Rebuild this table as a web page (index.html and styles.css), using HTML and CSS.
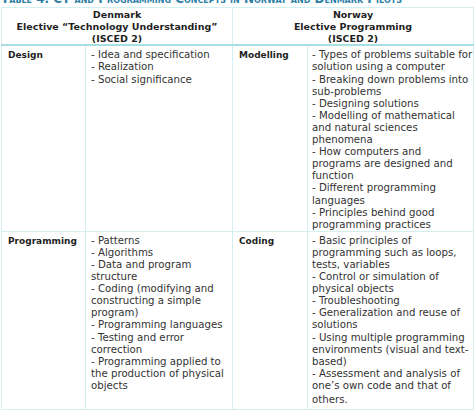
FILE: index.html
```html
<!DOCTYPE html>
<html>
<head>
<meta charset="utf-8">
<link rel="stylesheet" href="styles.css">
</head>
<body>
<div class="caption">Table 4. CT and Programming Concepts in Norway and Denmark Pilots</div>
<table class="grid">
  <colgroup>
    <col class="c1"><col class="c2"><col class="c3"><col class="c4">
  </colgroup>
  <thead>
    <tr>
      <th colspan="2">Denmark<br>Elective “Technology Understanding”<br>(ISCED 2)</th>
      <th colspan="2">Norway<br>Elective Programming<br>(ISCED 2)</th>
    </tr>
  </thead>
  <tbody>
    <tr class="first">
      <td class="label">Design</td>
      <td class="list">
        <div>- Idea and specification</div>
        <div>- Realization</div>
        <div>- Social significance</div>
      </td>
      <td class="label">Modelling</td>
      <td class="list right">
        <div>- Types of problems suitable for<br>solution using a computer</div>
        <div>- Breaking down problems into<br>sub-problems</div>
        <div>- Designing solutions</div>
        <div>- Modelling of mathematical<br>and natural sciences<br>phenomena</div>
        <div>- How computers and<br>programs are designed and<br>function</div>
        <div>- Different programming<br>languages</div>
        <div>- Principles behind good<br>programming practices</div>
      </td>
    </tr>
    <tr class="second">
      <td class="label">Programming</td>
      <td class="list">
        <div>- Patterns</div>
        <div>- Algorithms</div>
        <div>- Data and program<br>structure</div>
        <div>- Coding (modifying and<br>constructing a simple<br>program)</div>
        <div>- Programming languages</div>
        <div>- Testing and error<br>correction</div>
        <div>- Programming applied to<br>the production of physical<br>objects</div>
      </td>
      <td class="label">Coding</td>
      <td class="list right">
        <div>- Basic principles of<br>programming such as loops,<br>tests, variables</div>
        <div>- Control or simulation of<br>physical objects</div>
        <div>- Troubleshooting</div>
        <div>- Generalization and reuse of<br>solutions</div>
        <div>- Using multiple programming<br>environments (visual and text-<br>based)</div>
        <div>- Assessment and analysis of<br>one’s own code and that of<br><span class="tail">others.</span></div>
      </td>
    </tr>
  </tbody>
</table>
</body>
</html>
```
FILE: styles.css
```css
html, body {
  margin: 0;
  padding: 0;
  background: #ffffff;
}
body {
  font-family: "DejaVu Sans", sans-serif;
  color: #2a2a2a;
  font-size: 10.2px;
  line-height: 12.1px;
  overflow: hidden;
  height: 413px;
}
.caption {
  margin-top: -7px;
  height: 14px;
  padding-left: 1px;
  font-size: 12px;
  line-height: 12px;
  font-weight: bold;
  font-variant: small-caps;
  color: #2f7fa6;
  white-space: nowrap;
}
.grid {
  margin-left: 1px;
  width: 472px;
  border-collapse: collapse;
  table-layout: fixed;
}
.c1 { width: 84px; }
.c2 { width: 147px; }
.c3 { width: 75px; }
.c4 { width: 166px; }
th, td {
  border: 1px solid #d3efef;
  vertical-align: top;
  text-align: left;
}
th {
  font-size: 9.5px;
  line-height: 11.8px;
  font-weight: bold;
  text-align: center;
  padding: 1px 2px 0;
  border-bottom: 2px solid #a9dfe0;
  color: #1f1f1f;
}
td {
  padding: 3px 2px 0 5px;
  white-space: nowrap;
}
.second td {
  padding-bottom: 3px;
}
.label {
  font-size: 9px;
  font-weight: bold;
  padding-left: 6px;
  color: #1f1f1f;
}
.list {
  color: #333333;
  padding-left: 5px;
}
.list.right {
  padding-left: 4px;
}
.tail {
  display: inline-block;
  margin-top: 2px;
}
```
